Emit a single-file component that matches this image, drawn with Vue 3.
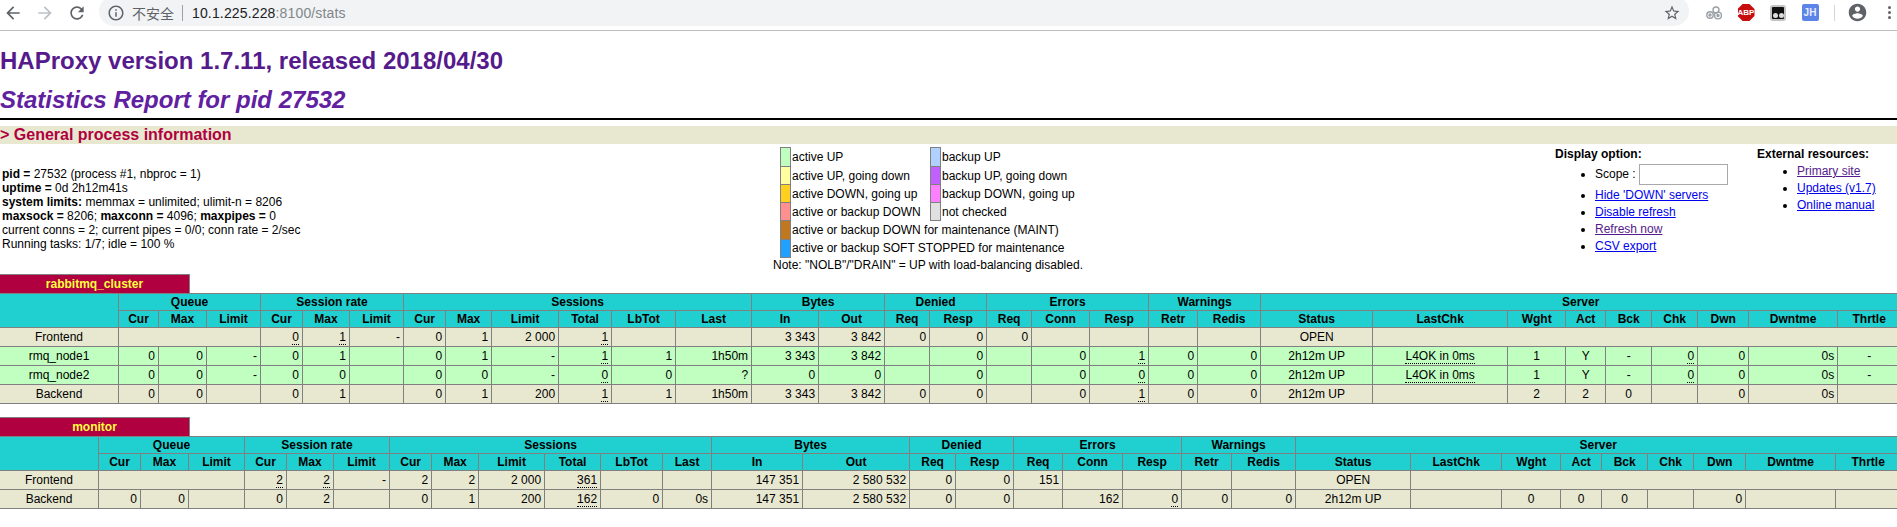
<script setup>
const groups = [
  ['Queue', 3], ['Session rate', 3], ['Sessions', 6], ['Bytes', 2],
  ['Denied', 2], ['Errors', 3], ['Warnings', 2], ['Server', 9],
]
const subs = ['Cur','Max','Limit','Cur','Max','Limit','Cur','Max','Limit','Total','LbTot','Last','In','Out','Req','Resp','Req','Conn','Resp','Retr','Redis','Status','LastChk','Wght','Act','Bck','Chk','Dwn','Dwntme','Thrtle']
const centered = new Set([0, 22, 23, 24, 25, 26, 30])
const blank = (span) => ({ span })

function widths(edges) {
  return edges.slice(1).map((e, i) => e - edges[i] + (i === 0 ? 1 : 0))
}
function cells(row) {
  let col = 0
  return row.map((raw) => {
    const span = raw && raw.span ? raw.span : 1
    const text = raw && raw.span ? '' : String(raw)
    const cell = {
      span,
      u: text.startsWith('~'),
      text: text.replace('~', ''),
      center: centered.has(col),
    }
    col += span
    return cell
  })
}

const tables = [
  {
    name: 'rabbitmq_cluster',
    edges: [0,118,158,206,260,302,349,403,445,491,558,611,675,751,818,884,929,986,1031,1089,1148,1197,1260,1372,1507,1565,1605,1651,1697,1748,1837,1900],
    rows: [
      { cls: 'plain', data: ['Frontend', blank(3), '~0', '~1', '-', 0, 1, '2 000', '~1', '', '', '3 343', '3 842', 0, 0, 0, '', '', '', '', 'OPEN', blank(8)] },
      { cls: 'up', data: ['rmq_node1', 0, 0, '-', 0, 1, '', 0, 1, '-', '~1', 1, '1h50m', '3 343', '3 842', '', 0, '', 0, '~1', 0, 0, '2h12m UP', '~L4OK in 0ms', 1, 'Y', '-', '~0', 0, '0s', '-'] },
      { cls: 'up', data: ['rmq_node2', 0, 0, '-', 0, 0, '', 0, 0, '-', '~0', 0, '?', 0, 0, '', 0, '', 0, '~0', 0, 0, '2h12m UP', '~L4OK in 0ms', 1, 'Y', '-', '~0', 0, '0s', '-'] },
      { cls: 'plain', data: ['Backend', 0, 0, '', 0, 1, '', 0, 1, 200, '~1', 1, '1h50m', '3 343', '3 842', 0, 0, '', 0, '~1', 0, 0, '2h12m UP', '', 2, 2, 0, '', 0, '0s', ''] },
    ],
  },
  {
    name: 'monitor',
    edges: [0,98,140,188,244,286,333,389,431,478,544,600,662,711,802,909,955,1013,1062,1122,1181,1231,1295,1410,1501,1560,1601,1647,1693,1745,1835,1900],
    rows: [
      { cls: 'plain', data: ['Frontend', blank(3), '~2', '~2', '-', 2, 2, '2 000', '~361', '', '', '147 351', '2 580 532', 0, 0, 151, '', '', '', '', 'OPEN', blank(8)] },
      { cls: 'plain', data: ['Backend', 0, 0, '', 0, 2, '', 0, 1, 200, '~162', 0, '0s', '147 351', '2 580 532', 0, 0, '', 162, '~0', 0, 0, '2h12m UP', '', 0, 0, 0, '', 0, '', ''] },
    ],
  },
].map((t) => ({
  ...t,
  cols: widths(t.edges),
  rows: t.rows.map((r) => ({ cls: r.cls, cells: cells(r.data) })),
}))
</script>

<template>
  <div class="page">
    <header class="toolbar">
      <div class="nav">
        <span class="slot"><svg width="20" height="20" viewBox="0 0 24 24" fill="#5f6368"><path d="M20 11H7.83l5.59-5.59L12 4l-8 8 8 8 1.41-1.41L7.83 13H20v-2z"/></svg></span>
        <span class="slot"><svg width="20" height="20" viewBox="0 0 24 24" fill="#bdc1c6"><path d="M12 4l-1.41 1.41L16.17 11H4v2h12.17l-5.58 5.59L12 20l8-8z"/></svg></span>
        <span class="slot"><svg width="20" height="20" viewBox="0 0 24 24" fill="#5f6368"><path d="M17.65 6.35C16.2 4.9 14.21 4 12 4c-4.42 0-7.99 3.58-7.99 8s3.57 8 7.99 8c3.73 0 6.84-2.55 7.73-6h-2.08c-.82 2.33-3.04 4-5.65 4-3.31 0-6-2.69-6-6s2.69-6 6-6c1.66 0 3.14.69 4.22 1.78L13 11h7V4l-2.35 2.35z"/></svg></span>
      </div>
      <div class="omnibox">
        <svg class="info-icon" width="18" height="18" viewBox="0 0 24 24" fill="#5f6368"><path d="M11 7h2v2h-2zm0 4h2v6h-2zm1-9C6.48 2 2 6.48 2 12s4.48 10 10 10 10-4.48 10-10S17.52 2 12 2zm0 18c-4.41 0-8-3.59-8-8s3.59-8 8-8 8 3.59 8 8-3.59 8-8 8z"/></svg>
        <span class="insecure">不安全</span>
        <span class="divider"></span>
        <span class="url"><span class="host">10.1.225.228</span>:8100/stats</span>
        <svg class="star" width="18" height="18" viewBox="0 0 24 24" fill="#5f6368"><path d="M22 9.24l-7.19-.62L12 2 9.19 8.63 2 9.24l5.46 4.73L5.82 21 12 17.27 18.18 21l-1.63-7.03L22 9.24zM12 15.4l-3.76 2.27 1-4.28-3.32-2.88 4.38-.38L12 6.1l1.71 4.04 4.38.38-3.32 2.88 1 4.28L12 15.4z"/></svg>
      </div>
      <div class="extensions">
        <span class="ext-slot">
          <svg width="18" height="16" viewBox="0 0 18 16" fill="none" stroke="#9aa0a6" stroke-width="1.4"><circle cx="11" cy="5" r="3"/><circle cx="5" cy="10" r="3.2"/><circle cx="13" cy="10.5" r="3.4"/><circle cx="13" cy="10.5" r="1" fill="#9aa0a6"/><circle cx="5" cy="10" r="1"/></svg>
        </span>
        <span class="ext-slot">
          <span class="abp">ABP</span>
        </span>
        <span class="ext-slot">
          <span class="mask"><i></i><i></i></span>
        </span>
        <span class="ext-slot">
          <span class="jh">JH</span>
        </span>
        <span class="toolbar-sep"></span>
        <svg class="avatar" width="21" height="21" viewBox="0 0 24 24" fill="#5f6368"><path d="M12 2C6.48 2 2 6.48 2 12s4.48 10 10 10 10-4.48 10-10S17.52 2 12 2zm0 3c1.66 0 3 1.34 3 3s-1.34 3-3 3-3-1.34-3-3 1.34-3 3-3zm0 14.2c-2.5 0-4.71-1.28-6-3.22.03-1.99 4-3.08 6-3.08 1.99 0 5.97 1.09 6 3.08-1.29 1.94-3.5 3.22-6 3.22z"/></svg>
        <span class="dots"><i></i><i></i><i></i></span>
      </div>
    </header>

    <h1>HAProxy version 1.7.11, released 2018/04/30</h1>
    <h2>Statistics Report for pid 27532</h2>
    <div class="rule"></div>
    <h3>&gt; General process information</h3>

    <section class="info">
      <div class="proc">
        <p><b>pid = </b>27532 (process #1, nbproc = 1)</p>
        <p><b>uptime = </b>0d 2h12m41s</p>
        <p><b>system limits:</b> memmax = unlimited; ulimit-n = 8206</p>
        <p><b>maxsock = </b>8206; <b>maxconn = </b>4096; <b>maxpipes = </b>0</p>
        <p>current conns = 2; current pipes = 0/0; conn rate = 2/sec</p>
        <p>Running tasks: 1/7; idle = 100 %</p>
      </div>

      <div class="legend">
        <table class="lgd">
          <colgroup><col class="sw" /><col class="l1" /><col class="sw" /><col class="l2" /></colgroup>
          <tbody>
            <tr class="first">
              <td class="swatch" style="background:#c0ffc0"></td><td class="lab">active UP</td>
              <td class="swatch" style="background:#b0d0ff"></td><td class="lab">backup UP</td>
            </tr>
            <tr>
              <td class="swatch" style="background:#ffffa0"></td><td class="lab">active UP, going down</td>
              <td class="swatch" style="background:#c060ff"></td><td class="lab">backup UP, going down</td>
            </tr>
            <tr>
              <td class="swatch" style="background:#ffd020"></td><td class="lab">active DOWN, going up</td>
              <td class="swatch" style="background:#ff80ff"></td><td class="lab">backup DOWN, going up</td>
            </tr>
            <tr>
              <td class="swatch" style="background:#ff9090"></td><td class="lab">active or backup DOWN</td>
              <td class="swatch" style="background:#e0e0e0"></td><td class="lab">not checked</td>
            </tr>
            <tr>
              <td class="swatch" style="background:#c07820"></td><td class="lab" colspan="3">active or backup DOWN for maintenance (MAINT)</td>
            </tr>
            <tr>
              <td class="swatch" style="background:#20a0ff"></td><td class="lab" colspan="3">active or backup SOFT STOPPED for maintenance</td>
            </tr>
          </tbody>
        </table>
        <p class="note">Note: "NOLB"/"DRAIN" = UP with load-balancing disabled.</p>
      </div>

      <div class="display">
        <b>Display option:</b>
        <ul>
          <li>Scope : <input class="scope" type="text" /></li>
          <li><a href="#" class="fresh">Hide 'DOWN' servers</a></li>
          <li><a href="#" class="fresh">Disable refresh</a></li>
          <li><a href="#" class="seen">Refresh now</a></li>
          <li><a href="#" class="fresh">CSV export</a></li>
        </ul>
      </div>

      <div class="external">
        <b>External resources:</b>
        <ul>
          <li><a href="#" class="seen">Primary site</a></li>
          <li><a href="#" class="fresh">Updates (v1.7)</a></li>
          <li><a href="#" class="fresh">Online manual</a></li>
        </ul>
      </div>
    </section>

    <section v-for="t in tables" :key="t.name" class="proxy">
      <div class="pxname">{{ t.name }}</div>
      <table class="tbl" :style="{ width: t.edges[t.edges.length - 1] + 1 + 'px' }">
        <colgroup>
          <col v-for="(w, i) in t.cols" :key="i" :style="{ width: w + 'px' }" />
        </colgroup>
        <thead>
          <tr>
            <th rowspan="2"></th>
            <th v-for="g in groups" :key="g[0]" :colspan="g[1]">{{ g[0] }}</th>
          </tr>
          <tr>
            <th v-for="(s, i) in subs" :key="i">{{ s }}</th>
          </tr>
        </thead>
        <tbody>
          <tr v-for="r in t.rows" :key="r.cells[0].text" :class="r.cls">
            <td
              v-for="(c, i) in r.cells"
              :key="i"
              :colspan="c.span"
              :class="{ center: c.center }"
            >
              <u v-if="c.u">{{ c.text }}</u>
              <template v-else>{{ c.text }}</template>
            </td>
          </tr>
        </tbody>
      </table>
    </section>
  </div>
</template>

<style scoped>
.page {
  width: 1897px;
  height: 527px;
  overflow: hidden;
  background: #fff;
  color: #000;
  font-family: "Liberation Sans", Arial, sans-serif;
  font-size: 12px;
  line-height: 14px;
}

.toolbar {
  display: flex;
  height: 30px;
  border-bottom: 1px solid #bdbdbd;
  overflow: hidden;
}
.nav {
  display: flex;
  gap: 6px;
  width: 99px;
  flex: none;
  height: 25px;
}
.slot {
  width: 26px;
  display: flex;
  align-items: center;
  justify-content: center;
}
.omnibox {
  flex: none;
  width: 1590px;
  height: 30px;
  margin-top: -4px;
  padding: 4px 8px 0 8px;
  box-sizing: border-box;
  border-radius: 15px;
  background: #f1f3f4;
  display: flex;
  align-items: center;
  font-size: 14px;
  line-height: 16px;
}
.insecure {
  margin-left: 7px;
  color: #5f6368;
  font-family: "Noto Sans CJK SC", sans-serif;
}
.divider {
  width: 1px;
  height: 16px;
  margin-left: 8px;
  background: #9aa0a6;
}
.url {
  margin-left: 9px;
  color: #80868b;
  letter-spacing: 0.15px;
  font-family: "Liberation Sans", Arial, sans-serif;
}
.host {
  color: #202124;
}
.star {
  margin-left: auto;
}
.extensions {
  flex: none;
  display: flex;
  align-items: center;
  height: 25px;
  padding-left: 9px;
}
.ext-slot {
  width: 32px;
  display: flex;
  justify-content: center;
  align-items: center;
}
.abp {
  width: 17px;
  height: 17px;
  background: #c70d0d;
  clip-path: polygon(30% 0, 70% 0, 100% 30%, 100% 70%, 70% 100%, 30% 100%, 0 70%, 0 30%);
  color: #fff;
  font-size: 8px;
  line-height: 17px;
  font-weight: bold;
  text-align: center;
}
.mask {
  width: 16px;
  height: 16px;
  box-sizing: border-box;
  border-radius: 3px;
  background: #111;
  border: 2px solid #c4c4c4;
  display: flex;
  gap: 1px;
  justify-content: center;
  align-items: flex-end;
  padding-bottom: 1px;
}
.mask i {
  width: 5px;
  height: 5px;
  border-radius: 50%;
  background: #ddd;
}
.jh {
  width: 17px;
  height: 17px;
  border-radius: 2px;
  background: #5b84e8;
  color: #e8eeff;
  font-size: 10px;
  line-height: 17px;
  font-weight: bold;
  text-align: center;
}
.toolbar-sep {
  width: 1px;
  height: 16px;
  margin-left: 8px;
  background: #d3d5d8;
}
.avatar {
  margin-left: 12px;
  flex: none;
}
.dots {
  display: flex;
  flex-direction: column;
  gap: 2px;
  margin-left: 17px;
  width: 8px;
  align-items: center;
}
.dots i {
  width: 3px;
  height: 3px;
  border-radius: 50%;
  background: #5f6368;
}

h1 {
  margin: 16px 0 12px;
  font-size: 24px;
  line-height: 27px;
  font-weight: bold;
  color: #551a8b;
}
h2 {
  margin: 0;
  font-size: 24px;
  line-height: 27px;
  font-weight: bold;
  font-style: italic;
  color: #6020a0;
}
.rule {
  height: 2px;
  margin: 5px 0 6px;
  background: #000;
}
h3 {
  margin: 0;
  font-size: 16px;
  line-height: 18px;
  font-weight: bold;
  color: #b00040;
  background: #e8e8d0;
}

.info {
  display: flex;
  height: 130px;
}
.info p {
  margin: 0;
}
.proc {
  width: 773px;
  flex: none;
  padding: 23px 0 0 2px;
  box-sizing: border-box;
}
.legend {
  width: 782px;
  flex: none;
  padding-top: 3px;
  box-sizing: border-box;
}
.lgd {
  margin-left: 7px;
  border-collapse: collapse;
  table-layout: fixed;
  width: 330px;
}
.sw {
  width: 10px;
}
.l1 {
  width: 140px;
}
.l2 {
  width: 180px;
}
.swatch {
  border: 1px solid gray;
  padding: 0;
  height: 17px;
}
.first .swatch {
  height: 18px;
}
.lab {
  padding: 2px 2px 2px 1px;
  white-space: nowrap;
  line-height: 14px;
}
.note {
  white-space: nowrap;
}
.display {
  width: 202px;
  flex: none;
  padding-top: 3px;
  box-sizing: border-box;
}
.external {
  flex: none;
  padding-top: 3px;
}
ul {
  margin: 0;
  padding: 0 0 0 40px;
}
li {
  margin-top: 3px;
  white-space: nowrap;
}
.scope {
  box-sizing: border-box;
  width: 89px;
  height: 21px;
  margin: 0;
  border: 1px solid #a9a9a9;
  background: #fff;
  vertical-align: middle;
}
.fresh {
  color: #0000ee;
}
.seen {
  color: #551a8b;
}

.proxy {
  margin-bottom: 13px;
}
.pxname {
  width: 190px;
  height: 19px;
  box-sizing: border-box;
  padding: 2px 3px;
  background: #b00040;
  color: #ffff40;
  font-weight: bold;
  text-align: center;
  border: 1px solid gray;
  border-bottom: none;
  border-left: none;
}
.tbl {
  border-collapse: collapse;
  table-layout: fixed;
  margin-left: -1px;
}
.tbl th {
  padding: 1px;
  border: 1px solid gray;
  background: #20d0d0;
  color: #000;
  font-weight: bold;
  text-align: center;
  white-space: nowrap;
  font-size: 12px;
  line-height: 14px;
  height: 14px;
}
.tbl td {
  padding: 2px 3px;
  border: 1px solid gray;
  text-align: right;
  white-space: nowrap;
  font-size: 12px;
  line-height: 14px;
  height: 14px;
}
.tbl td.center {
  text-align: center;
}
.plain td {
  background: #e8e8d0;
}
.up td {
  background: #c0ffc0;
}
u {
  text-decoration: none;
  border-bottom: 1px dotted #000;
}
</style>

<style>
html,
body {
  margin: 0;
  overflow: hidden;
  background: #fff;
}
</style>
